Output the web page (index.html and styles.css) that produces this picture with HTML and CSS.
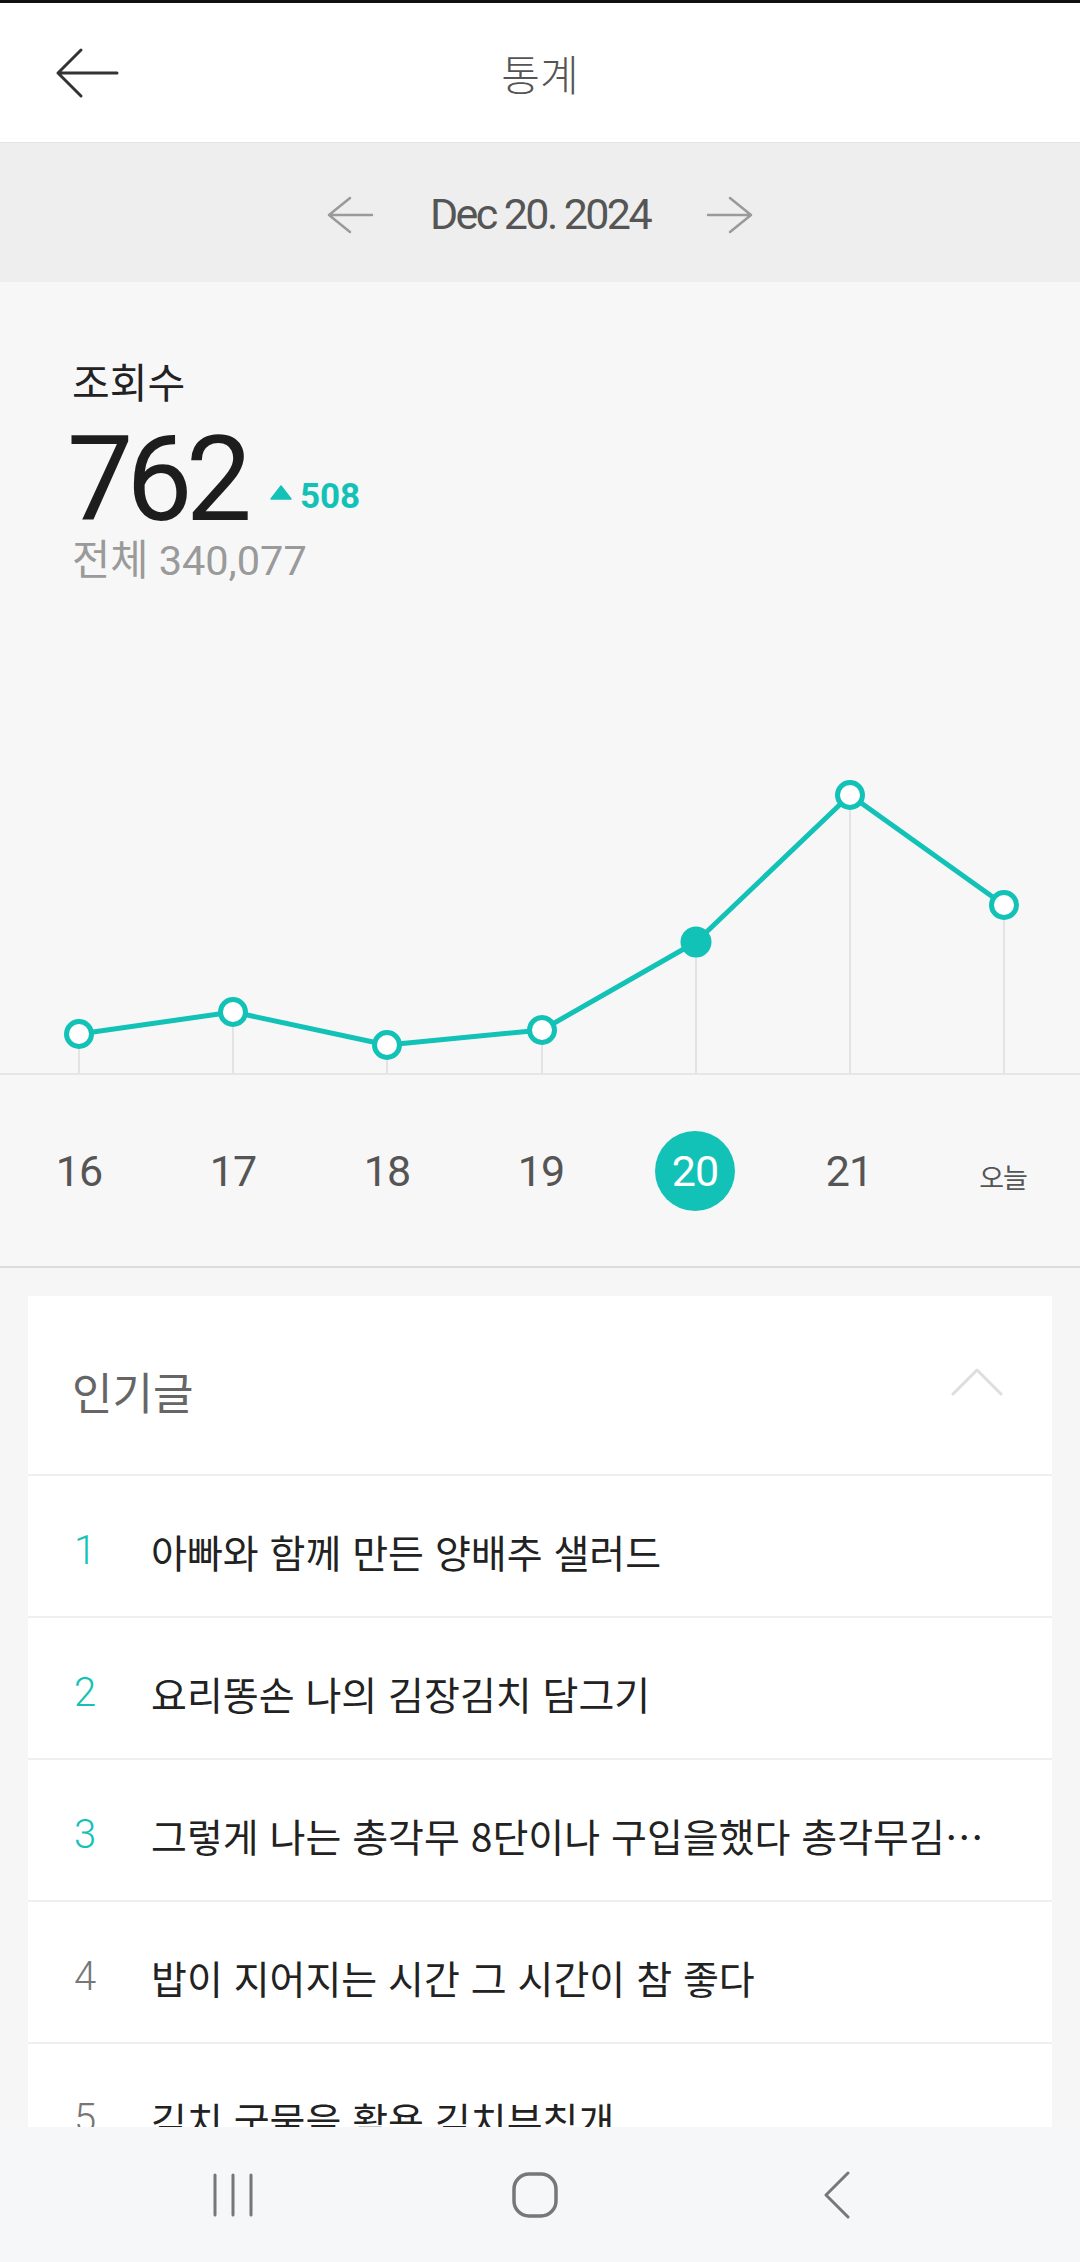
FILE: index.html
```html
<!DOCTYPE html>
<html lang="ko">
<head>
<meta charset="utf-8">
<title>통계</title>
<link rel="stylesheet" href="styles.css">
</head>
<body>
<div class="statusbar"></div>
<header class="topbar">
  <div class="topbar-side">
    <svg class="back" width="64" height="52" viewBox="0 0 64 52"><path d="M26 3 L3 26 L26 49 M3 26 H62" fill="none" stroke="#333" stroke-width="3" stroke-linecap="round" stroke-linejoin="round"/></svg>
  </div>
  <h1 class="title">통계</h1>
  <div class="topbar-side"></div>
</header>
<div class="datebar">
  <svg class="date-arrow" width="48" height="38" viewBox="0 0 48 38"><path d="M24 2 L3 19 L24 36 M3 19 H46" fill="none" stroke="#9a9a9a" stroke-width="2.5" stroke-linecap="round" stroke-linejoin="round"/></svg>
  <span class="date">Dec 20. 2024</span>
  <svg class="date-arrow" width="48" height="38" viewBox="0 0 48 38"><path d="M24 2 L45 19 L24 36 M45 19 H2" fill="none" stroke="#9a9a9a" stroke-width="2.5" stroke-linecap="round" stroke-linejoin="round"/></svg>
</div>
<section class="stats">
  <div class="stats-head">
    <div class="label">조회수</div>
    <div class="count-row">
      <span class="count">762</span>
      <span class="delta"><svg class="tri" width="22" height="15" viewBox="0 0 22 15"><path d="M11 1 L21 14 H1 Z" fill="#13c2b7" stroke="#13c2b7" stroke-width="1.5" stroke-linejoin="round"/></svg>508</span>
    </div>
    <div class="total">전체 340,077</div>
  </div>
  <svg class="chart" width="1080" height="496" viewBox="0 580 1080 496">
    <g stroke="#e3e3e3" stroke-width="2">
      <line x1="79" y1="1034" x2="79" y2="1074"/>
      <line x1="233" y1="1012" x2="233" y2="1074"/>
      <line x1="387" y1="1045" x2="387" y2="1074"/>
      <line x1="542" y1="1030" x2="542" y2="1074"/>
      <line x1="696" y1="942" x2="696" y2="1074"/>
      <line x1="850" y1="795" x2="850" y2="1074"/>
      <line x1="1004" y1="905" x2="1004" y2="1074"/>
    </g>
    <line x1="0" y1="1074" x2="1080" y2="1074" stroke="#e6e6e6" stroke-width="2"/>
    <polyline points="79,1034 233,1012 387,1045 542,1030 696,942 850,795 1004,905" fill="none" stroke="#13c2b7" stroke-width="5" stroke-linejoin="round"/>
    <g fill="#fff" stroke="#13c2b7" stroke-width="5">
      <circle cx="79" cy="1034" r="12.5"/>
      <circle cx="233" cy="1012" r="12.5"/>
      <circle cx="387" cy="1045" r="12.5"/>
      <circle cx="542" cy="1030" r="12.5"/>
      <circle cx="850" cy="795" r="12.5"/>
      <circle cx="1004" cy="905" r="12.5"/>
    </g>
    <circle cx="696" cy="942" r="15.5" fill="#13c2b7"/>
  </svg>
  <div class="days">
    <span class="day">16</span>
    <span class="day">17</span>
    <span class="day">18</span>
    <span class="day">19</span>
    <span class="day"><span class="day-on">20</span></span>
    <span class="day">21</span>
    <span class="day today">오늘</span>
  </div>
</section>
<section class="popular">
  <div class="card">
    <div class="card-head">
      <h2 class="card-title">인기글</h2>
      <svg class="chev" width="52" height="30" viewBox="0 0 52 30"><path d="M2 27 L26 3 L50 27" fill="none" stroke="#dedede" stroke-width="3" stroke-linecap="round" stroke-linejoin="round"/></svg>
    </div>
    <ol class="list">
      <li class="item"><span class="rank hot">1</span><span class="subject">아빠와 함께 만든 양배추 샐러드</span></li>
      <li class="item"><span class="rank hot">2</span><span class="subject">요리똥손 나의 김장김치 담그기</span></li>
      <li class="item"><span class="rank hot">3</span><span class="subject">그렇게 나는 총각무 8단이나 구입을했다 총각무김치 담그기</span></li>
      <li class="item"><span class="rank">4</span><span class="subject">밥이 지어지는 시간 그 시간이 참 좋다</span></li>
      <li class="item"><span class="rank">5</span><span class="subject">김치 국물을 활용 김치부침개</span></li>
    </ol>
  </div>
</section>
<nav class="navbar">
  <span class="nav-slot"><svg width="42" height="44" viewBox="0 0 42 44"><path d="M3 2 V42 M21 2 V42 M39 2 V42" stroke="#777" stroke-width="3" stroke-linecap="round"/></svg></span>
  <span class="nav-slot"><svg width="46" height="46" viewBox="0 0 46 46"><rect x="2" y="2" width="42" height="42" rx="15" fill="none" stroke="#777" stroke-width="3.5"/></svg></span>
  <span class="nav-slot"><svg width="28" height="48" viewBox="0 0 28 48"><path d="M25 2 L3 24 L25 46" fill="none" stroke="#777" stroke-width="3" stroke-linecap="round" stroke-linejoin="round"/></svg></span>
</nav>
</body>
</html>
```

FILE: styles.css
```css
* { box-sizing: border-box; }
html, body { margin: 0; padding: 0; }
body {
  width: 1080px;
  height: 2262px;
  overflow: hidden;
  background: #f6f6f6;
  font-family: "Noto Sans CJK KR", "Noto Sans", sans-serif;
  color: #222;
}
.statusbar { height: 3px; background: #111; }
.topbar {
  height: 140px;
  background: #fff;
  border-bottom: 1px solid #e4e4e4;
  display: grid;
  grid-template-columns: 1fr auto 1fr;
  align-items: center;
}
.topbar-side { display: flex; align-items: center; padding-left: 55px; }
.back { display: block; }
.title {
  margin: 0;
  font-size: 42px;
  line-height: 42px;
  font-weight: 300;
  color: #555;
}
.datebar {
  height: 139px;
  background: #eeeeee;
  display: flex;
  align-items: center;
  justify-content: center;
  gap: 56px;
  padding-top: 4px;
}
.date-arrow { display: block; }
.date {
  font-family: "Roboto", sans-serif;
  font-size: 43px;
  line-height: 43px;
  letter-spacing: -2.6px;
  color: #555;
}
.stats { background: #f7f7f7; border-bottom: 2px solid #dcdcdc; }
.stats-head { padding: 78px 0 0 72px; }
.label { font-size: 41px; line-height: 40px; color: #222; }
.count-row { display: flex; align-items: flex-start; margin-top: 22px; height: 116px; }
.count {
  margin-left: -5px;
  font-family: "Roboto", sans-serif;
  font-size: 118px;
  line-height: 116px;
  letter-spacing: -7px;
  color: #1d1d1d;
}
.delta {
  display: flex;
  align-items: center;
  gap: 8px;
  margin: 57px 0 0 25px;
  font-family: "Roboto", sans-serif;
  font-weight: 700;
  font-size: 35px;
  line-height: 35px;
  color: #13c2b7;
}
.tri { display: block; margin-top: -8px; }
.total {
  height: 42px;
  margin-top: 2px;
  font-family: "Roboto", "Noto Sans CJK KR", sans-serif;
  font-size: 41.5px;
  line-height: 42px;
  color: #9a9a9a;
  white-space: nowrap;
}
.chart { display: block; margin-top: -2px; }
.days {
  height: 190px;
  display: grid;
  grid-template-columns: repeat(7, 1fr);
  align-items: center;
  justify-items: center;
  padding: 0 0 0 2px;
}
.day {
  font-family: "Roboto", sans-serif;
  font-size: 43px;
  line-height: 43px;
  letter-spacing: -1px;
  color: #555;
}
.day-on {
  display: flex;
  width: 80px;
  height: 80px;
  border-radius: 50%;
  background: #13c2b7;
  color: #fff;
  align-items: center;
  justify-content: center;
}
.today {
  font-family: "Noto Sans CJK KR", sans-serif;
  font-size: 27px;
  line-height: 30px;
  padding-top: 12px;
}
.popular { padding: 28px 28px 0; }
.card { background: #fff; }
.card-head {
  height: 178px;
  display: flex;
  align-items: center;
  justify-content: space-between;
  padding: 12px 49px 0 44px;
}
.card-title {
  margin: 0;
  font-size: 44px;
  line-height: 50px;
  font-weight: 400;
  color: #666;
}
.chev { display: block; margin-top: -18px; }
.list { list-style: none; margin: 0; padding: 0; }
.item {
  height: 142px;
  border-top: 2px solid #efefef;
  display: flex;
  align-items: center;
  padding: 10px 52px 0 46px;
}
.rank {
  flex: 0 0 77px;
  font-family: "Roboto", sans-serif;
  font-size: 40px;
  line-height: 48px;
  font-weight: 300;
  color: #777;
}
.rank.hot { color: #13c2b7; }
.subject {
  flex: 1 1 auto;
  min-width: 0;
  font-size: 39px;
  line-height: 60px;
  letter-spacing: 0;
  color: #222;
  white-space: nowrap;
  overflow: hidden;
  text-overflow: ellipsis;
}
.navbar {
  position: fixed;
  left: 0;
  right: 0;
  bottom: 0;
  height: 135px;
  background: #f6f7f9;
  display: flex;
  align-items: center;
  justify-content: center;
  padding: 0 10px 0 0;
}
.nav-slot {
  width: 302px;
  display: flex;
  justify-content: center;
  align-items: center;
}
.nav-slot svg { display: block; }
```
